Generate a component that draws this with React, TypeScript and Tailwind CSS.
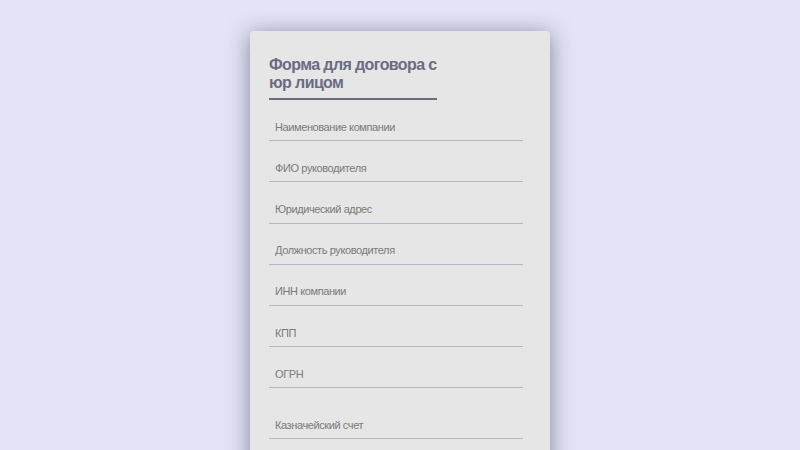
const fields = [
  'Наименование компании',
  'ФИО руководителя',
  'Юридический адрес',
  'Должность руководителя',
  'ИНН компании',
  'КПП',
  'ОГРН',
];

export default function App() {
  return (
    <div className="min-h-screen bg-[#e4e4f7] flex justify-center pt-[31px] font-['Liberation_Sans',Arial,sans-serif] overflow-hidden h-[450px]">
      <div className="w-[300px] bg-[#e6e6e6] rounded-[4px] shadow-[0_3px_22px_rgba(50,50,80,0.55)] px-[19px] pt-[25px] pb-10 h-[600px] shrink-0">
        <h2 className="w-[168px] text-[16px] leading-[18px] tracking-[-0.6px] font-bold text-[#6b6b84] pb-[6px] border-b-2 border-[#6b6b84]">
          Форма для договора с юр лицом
        </h2>
        <form className="w-[254px]">
          {fields.map((f) => (
            <input
              key={f}
              placeholder={f}
              className="block w-full mt-[13.2px] h-[28px] bg-transparent border-b border-[#b5b5c9] px-[6px] text-[11px] tracking-[-0.4px] text-[#555] placeholder:text-[#7a7a7a] outline-none"
            />
          ))}
          <input
            placeholder="Казначейский счет"
            className="block w-full mt-[23px] h-[28px] bg-transparent border-b border-[#b5b5c9] px-[6px] text-[11px] tracking-[-0.4px] text-[#555] placeholder:text-[#7a7a7a] outline-none"
          />
        </form>
      </div>
    </div>
  );
}
